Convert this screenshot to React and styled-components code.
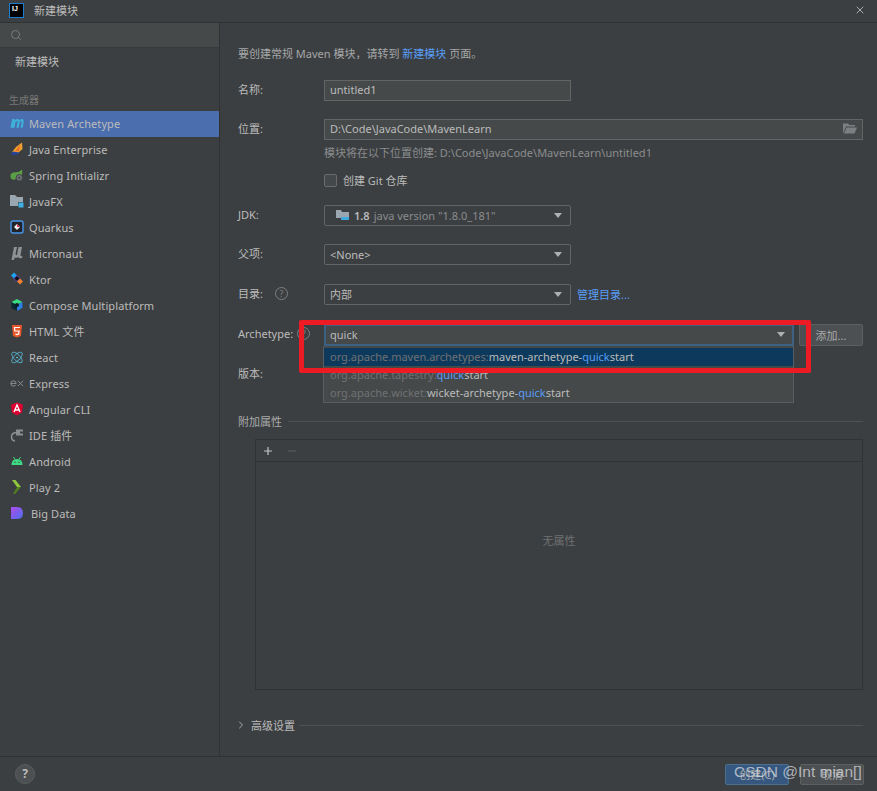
import React from 'react';
import styled, { createGlobalStyle } from 'styled-components';
import { Search, X, ChevronRight, Plus, Minus, Atom } from 'lucide-react';

const GlobalStyle = createGlobalStyle`
  html, body { margin: 0; padding: 0; background: #3c3f41; }
  body { font-family: "Noto Sans", "Noto Sans CJK SC", sans-serif; font-size: 11px; color: #bbbbbb; }
`;

const Dialog = styled.div`
  position: relative;
  width: 877px;
  height: 791px;
  overflow: hidden;
  display: flex;
  flex-direction: column;
  background: #3c3f41;
`;

const TitleBar = styled.div`
  height: 20px;
  flex: none;
  display: flex;
  align-items: center;
  padding: 0 11px 2px 9px;
  gap: 10px;
  border-bottom: 1px solid #323232;
  color: #bbbbbb;
  font-size: 11px;
`;

const AppLogo = styled.div`
  width: 15px;
  height: 15px;
  background: #000;
  border: 1px solid #1a7fd0;
  color: #fff;
  font: 700 7px/9px "Liberation Sans", sans-serif;
  box-sizing: border-box;
  padding-left: 2px;
`;

const TitleText = styled.span`
  flex: 1;
`;

const Body = styled.div`
  flex: 1;
  display: flex;
  min-height: 0;
`;

const Sidebar = styled.div`
  width: 219px;
  flex: none;
  border-right: 1px solid #323232;
  display: flex;
  flex-direction: column;
`;

const SearchBox = styled.div`
  height: 24px;
  background: #45494a;
  border-bottom: 1px solid #383b3d;
  display: flex;
  align-items: center;
  padding-left: 10px;
  color: #7a7d7f;
`;

const NewModule = styled.div`
  height: 28px;
  line-height: 28px;
  padding-left: 15px;
  color: #bbbbbb;
`;

const GroupLabel = styled.div`
  margin-top: 14px;
  height: 21px;
  line-height: 20px;
  padding-left: 9px;
  font-size: 10px;
  color: #787878;
`;

const Item = styled.div`
  box-sizing: border-box;
  height: 26px;
  display: flex;
  align-items: center;
  gap: ${p => p.$gap || 5}px;
  padding: 0 0 2px 10px;
  font-size: 11px;
  letter-spacing: 0.1px;
  color: #bbbbbb;
  background: ${p => (p.$active ? '#4b6eaf' : 'transparent')};
`;

const IconSlot = styled.span`
  width: 14px;
  height: 14px;
  display: flex;
  align-items: center;
  justify-content: center;
  flex: none;
`;

const Main = styled.div`
  flex: 1;
  min-width: 0;
  position: relative;
  display: flex;
  flex-direction: column;
  padding: 22px 14px 0 18px;
`;

const Intro = styled.div`
  height: 18px;
  line-height: 18px;
  color: #a5a7a8;
  margin-bottom: 17px;
`;

const Link = styled.span`
  color: #589df6;
`;

const DirLink = styled(Link)`
  margin-left: 6px;
  padding-bottom: 2px;
`;

const Row = styled.div`
  display: flex;
  align-items: center;
  height: ${p => p.$h || 21}px;
  margin-bottom: ${p => p.$mb ?? 18}px;
`;

const Label = styled.div`
  width: 86px;
  flex: none;
  display: flex;
  align-items: center;
  gap: ${p => p.$gap || 6}px;
  padding-bottom: 3px;
  color: #bbbbbb;
`;

const Field = styled.div`
  box-sizing: border-box;
  height: 100%;
  width: ${p => p.$w || '247px'};
  flex: ${p => (p.$grow ? 1 : 'none')};
  display: flex;
  align-items: center;
  padding: 0 5px 2px;
  background: #45494a;
  border: 1px solid #646464;
  color: #bbbbbb;
`;

const Select = styled.div`
  box-sizing: border-box;
  height: 100%;
  width: ${p => p.$w || '247px'};
  flex: none;
  display: flex;
  align-items: center;
  gap: 4px;
  padding: 0 5px 1px;
  background: #3c3f41;
  border: 1px solid #646464;
  border-radius: 2px;
  color: #bbbbbb;
`;

const ActiveSelect = styled(Select)`
  background: #45494a;
  border: 2px solid #3d6185;
  border-radius: 0;
  color: #bbbbbb;
  padding: 0 4px 2px;
`;

const Caret = styled.span`
  margin-left: auto;
  margin-right: 3px;
  width: 0;
  height: 0;
  border-left: 4px solid transparent;
  border-right: 4px solid transparent;
  border-top: 5px solid #aeb0b2;
`;

const Help = styled.span`
  width: 11px;
  height: 11px;
  border: 1px solid #7e8183;
  border-radius: 50%;
  color: #7e8183;
  font-size: 9px;
  line-height: 11px;
  text-align: center;
`;

const Hint = styled.div`
  height: 20px;
  line-height: 18px;
  margin-left: 86px;
  margin-bottom: 7px;
  color: #8a8c8e;
`;

const CheckRow = styled.label`
  height: 18px;
  margin-left: 86px;
  margin-bottom: 16px;
  display: flex;
  align-items: center;
  gap: 6px;
`;

const CheckBox = styled.span`
  width: 11px;
  height: 11px;
  border: 1px solid #6b6b6b;
  border-radius: 2px;
  background: #43494a;
`;

const Muted = styled.span`
  color: #8a8c8e;
`;

const Strong = styled.span`
  color: #bbbbbb;
  font-weight: 600;
`;

const JdkIcon = styled.svg`
  margin-left: 6px;
`;

const FolderIcon = styled.svg`
  margin-left: auto;
`;

const AddButton = styled.div`
  box-sizing: border-box;
  width: 64px;
  height: 100%;
  margin-left: 5px;
  display: flex;
  align-items: center;
  justify-content: center;
  background: #4c5052;
  border: 1px solid #5e6060;
  border-radius: 2px;
  color: #a8aaab;
`;

const Popup = styled.div`
  position: absolute;
  left: 103px;
  top: 323px;
  width: 469px;
  padding-top: 2px;
  background: #45494a;
  border: 1px solid #5a5d5f;
  border-top: none;
  z-index: 2;
`;

const PopupRow = styled.div`
  height: 18px;
  line-height: 18px;
  padding-left: 6px;
  color: #bbbbbb;
  background: ${p => (p.$active ? '#0d3a5c' : 'transparent')};
`;

const Group = styled.span`
  color: #6f7173;
`;

const Match = styled.span`
  color: #589df6;
`;

const SectionTitle = styled.div`
  display: flex;
  align-items: center;
  gap: 6px;
  height: 18px;
  color: #a9abac;
  &::after {
    content: "";
    flex: 1;
    height: 1px;
    background: #515151;
  }
`;

const PropsPanel = styled.div`
  margin: 9px 0 0 17px;
  height: 251px;
  box-sizing: border-box;
  border: 1px solid #323232;
  display: flex;
  flex-direction: column;
`;

const PanelTools = styled.div`
  box-sizing: border-box;
  height: 22px;
  flex: none;
  display: flex;
  align-items: center;
  gap: 12px;
  padding-left: 6px;
  border-bottom: 1px solid #323232;
`;

const PanelEmpty = styled.div`
  flex: 1;
  display: flex;
  align-items: flex-start;
  justify-content: center;
  padding-top: 70px;
  color: #6f7173;
`;

const Advanced = styled(SectionTitle)`
  margin-top: 26px;
  gap: 4px;
  color: #bbbbbb;
`;

const AdvancedChevron = styled(ChevronRight)`
  margin-left: -3px;
`;

const Footer = styled.div`
  height: 34px;
  flex: none;
  border-top: 1px solid #323232;
  display: flex;
  align-items: center;
  padding: 0 13px 0 15px;
  gap: 11px;
`;

const HelpButton = styled.div`
  width: 20px;
  height: 20px;
  border-radius: 50%;
  background: #4c5052;
  border: 1px solid #5a5d5f;
  box-sizing: border-box;
  margin-right: auto;
  color: #bbbbbb;
  font-weight: 700;
  font-size: 12px;
  line-height: 18px;
  text-align: center;
`;

const Button = styled.div`
  box-sizing: border-box;
  width: 64px;
  height: 21px;
  display: flex;
  align-items: center;
  justify-content: center;
  border-radius: 2px;
  color: #a9abac;
  background: ${p => (p.$primary ? '#365880' : '#4c5052')};
  border: 1px solid ${p => (p.$primary ? '#4c708c' : '#5e6060')};
`;

const Highlight = styled.div`
  position: absolute;
  left: 299px;
  top: 320px;
  width: 512px;
  height: 53px;
  box-sizing: border-box;
  border: 5px solid #ed1c24;
  border-radius: 2px;
  z-index: 3;
  pointer-events: none;
`;

const Watermark = styled.div`
  position: absolute;
  left: 734px;
  top: 761px;
  font: 15.5px/22px "Liberation Sans", sans-serif;
  color: rgba(220, 222, 224, 0.72);
  white-space: nowrap;
  z-index: 4;
`;

const icons = {
  maven: (
    <svg width="16" height="12" viewBox="0 2 16 11"><path d="M0.500 13 L2.500 3 H5.500 L5.500 4.500 Q7.500 2.500 9 3 Q10.500 3.200 10.700 4.500 Q12.500 2.500 14.300 3 Q16 3.500 15.700 6 L14.500 13 H12 L13.200 6.500 Q13.200 5.200 12.200 5.600 Q11.200 6 11 7 L10 13 H7.400 L8.600 6.500 Q8.600 5.200 7.600 5.600 Q6.500 6 6.200 7 L5.200 13 Z" fill="#3fb1d8" /></svg>
  ),
  java: (
    <svg width="14" height="14" viewBox="0 0 14 14"><path d="M2 10 L6 5 L12 0.500 L12.500 7 L8 11 Z" fill="#f0a030" /><path d="M0.500 13 L8 12.500 L9 10.500 L3 9.500 Z" fill="#23459c" /><path d="M5 9.500 L10 3 L9 9 Z" fill="#e76f24" /></svg>
  ),
  spring: (
    <svg width="15" height="14" viewBox="0 0 15 14"><path d="M0.500 8 Q0.500 4 6 4 Q10 4 13 1 Q14 8 10 10 L4 12 Q0.500 12 0.500 8 Z" fill="#5a9e46" /><circle cx="10" cy="10" r="3.500" fill="#6e7275" stroke="#3c3f41" /><circle cx="10" cy="10" r="1.200" fill="#3c3f41" /></svg>
  ),
  javafx: (
    <svg width="14" height="14" viewBox="0 0 14 14"><path d="M0 1 H5 L7 3 H13 V8 H8 V12 H0 Z" fill="#9aa7b0" /><rect x="8.500" y="8.500" width="5" height="5" fill="#3fb1e5" /></svg>
  ),
  quarkus: (
    <svg width="14" height="14" viewBox="0 0 14 14"><rect x="1" y="1" width="12" height="12" rx="2" fill="#20242a" stroke="#4695eb" strokeWidth="1.400" /><path d="M7 4 L10 7 L7 10 L4 7 Z" fill="#f0f0f0" /><path d="M7 4 L10 7 L7 7 Z" fill="#e0344a" /></svg>
  ),
  micronaut: (
    <svg width="14" height="14" viewBox="0 0 14 14"><path d="M4 1 H7 L5.500 8 Q5.500 9.500 7 9 L8.500 1 H12 L10.500 9 Q10.500 10.500 12.500 10 L12 12 Q9 13 8 11 Q6 12.500 4.700 11.500 L4 14 H1.500 Z" fill="#8e9295" /></svg>
  ),
  ktor: (
    <svg width="14" height="14" viewBox="0 0 14 14"><path d="M4 0.500 L7 3.500 L4 6.500 L1 3.500 Z" fill="#1aa4f2" /><path d="M7 3.500 L10 6.500 L7 9.500 L4 6.500 Z" fill="#111" stroke="#7d4de0" strokeWidth=".8" /><path d="M10 6.500 L13 9.500 L10 12.500 L7 9.500 Z" fill="#f08030" /></svg>
  ),
  compose: (
    <svg width="14" height="14" viewBox="0 0 14 14"><path d="M7 1 L12.500 4 V10 L7 13 L1.500 10 V4 Z" fill="#0b2a33" /><path d="M7 1 L12.500 4 L7 7 L1.500 4 Z" fill="#3ddc84" /><path d="M12.500 4 V10 L7 13 V7 Z" fill="#2f7fe0" /><circle cx="7" cy="7" r="2" fill="#0c1c22" /></svg>
  ),
  html: (
    <svg width="14" height="14" viewBox="0 0 14 14"><path d="M2 1 H12 L11 12 L7 13.500 L3 12 Z" fill="#e8562a" /><path d="M10 3.500 H4.500 L4.800 7 H9 L8.700 10 L7 10.600 L5.400 10" fill="none" stroke="#fff" strokeWidth="1.200" /></svg>
  ),
  react: <Atom size={15} color="#5cc9e8" strokeWidth={1.400} />,
  express: (
    <svg width="15" height="14" viewBox="0 0 16 14"><path d="M1 7.500 H7 Q7 4.500 4 4.500 Q1 4.500 1 7.500 Q1 10.500 4 10.500 Q6 10.500 6.800 9 M9 4.500 L15 10.500 M15 4.500 L9 10.500" fill="none" stroke="#8c8f91" strokeWidth="1.100" /></svg>
  ),
  angular: (
    <svg width="14" height="14" viewBox="0 0 14 14"><path d="M7 0.500 L13 2.800 L12 10.500 L7 13.500 L2 10.500 L1 2.800 Z" fill="#dd0031" /><path d="M4 10 L7 3 L10 10 M5.200 8 H8.800" fill="none" stroke="#fff" strokeWidth="1.300" /></svg>
  ),
  ide: (
    <svg width="14" height="14" viewBox="0 0 14 14"><path d="M6 1.500 H13 V3.500 H10 V5.500 H13 V7.500 H6 Z" fill="#8c8f91" /><path d="M6 4.500 Q1.500 5 1.500 9 Q1.500 12.500 5 13" fill="none" stroke="#8c8f91" strokeWidth="1.600" /></svg>
  ),
  android: (
    <svg width="14" height="14" viewBox="0 0 14 14"><path d="M1.500 11 Q1.500 5 7 5 Q12.500 5 12.500 11 Z" fill="#3ddc84" /><path d="M3.500 3 L5 5.500 M10.500 3 L9 5.500" stroke="#3ddc84" strokeWidth="1" /><circle cx="5" cy="8.300" r=".7" fill="#3c3f41" /><circle cx="9" cy="8.300" r=".7" fill="#3c3f41" /></svg>
  ),
  play: (
    <svg width="14" height="14" viewBox="0 0 14 14"><path d="M2 0 H5.500 L11 7 H7 Z" fill="#92c83e" /><path d="M11 7 L5 14 H3 L7 7 Z" fill="#4f7f1e" /></svg>
  ),
  bigdata: (
    <svg width="14" height="14" viewBox="0 0 14 14"><defs><linearGradient id="bd" x1="0" y1="0" x2="1" y2="1"><stop offset="0" stopColor="#b04be8" /><stop offset="1" stopColor="#4a70f0" /></linearGradient></defs><path d="M1 1 H7 Q13 1 13 7 Q13 13 7 13 H1 Z" fill="url(#bd)" /></svg>
  ),
};

const generators = [
  ['maven', 'Maven Archetype'],
  ['java', 'Java Enterprise'],
  ['spring', 'Spring Initializr'],
  ['javafx', 'JavaFX'],
  ['quarkus', 'Quarkus'],
  ['micronaut', 'Micronaut'],
  ['ktor', 'Ktor'],
  ['compose', 'Compose Multiplatform'],
  ['html', 'HTML 文件'],
  ['react', 'React'],
  ['express', 'Express'],
  ['angular', 'Angular CLI'],
  ['ide', 'IDE 插件'],
  ['android', 'Android'],
  ['play', 'Play 2'],
  ['bigdata', 'Big Data'],
];

const App = () => {
  return (
    <Dialog>
      <GlobalStyle />
      <TitleBar>
        <AppLogo>IJ</AppLogo>
        <TitleText>新建模块</TitleText>
        <X size={12} color="#a9abac" />
      </TitleBar>
      <Body>
        <Sidebar>
          <SearchBox><Search size={12} /></SearchBox>
          <NewModule>新建模块</NewModule>
          <GroupLabel>生成器</GroupLabel>
          {generators.map(([key, name]) => (
            <Item key={key} $active={key === 'maven'} $gap={key === 'bigdata' ? 7 : 5}>
              <IconSlot>{icons[key]}</IconSlot>
              {name}
            </Item>
          ))}
        </Sidebar>
        <Main>
          <Intro>要创建常规 Maven 模块，请转到 <Link>新建模块</Link> 页面。</Intro>
          <Row>
            <Label>名称:</Label>
            <Field>untitled1</Field>
          </Row>
          <Row $mb={4}>
            <Label>位置:</Label>
            <Field $grow>
              D:\Code\JavaCode\MavenLearn
              <FolderIcon width="14" height="11" viewBox="0 0 14 11">
                <path d="M0 0.500 H5 L6.500 2 H12 V3.500 H3 L0 10.500 Z" fill="#7d8082" />
                <path d="M3.500 4.500 H14 L11.500 10.500 H1 Z" fill="#7d8082" />
              </FolderIcon>
            </Field>
          </Row>
          <Hint>模块将在以下位置创建: D:\Code\JavaCode\MavenLearn\untitled1</Hint>
          <CheckRow><CheckBox />创建 Git 仓库</CheckRow>
          <Row>
            <Label>JDK:</Label>
            <Select>
              <JdkIcon width="14" height="12" viewBox="0 0 14 12"><path d="M0 1 H5 L6 3 H13 V9 H0 Z" fill="#9aa7b0" /><rect x="5" y="8" width="8" height="3" fill="#3fa9e0" /></JdkIcon>
              <Strong>1.8</Strong> <Muted>java version "1.8.0_181"</Muted>
              <Caret />
            </Select>
          </Row>
          <Row $mb={19}>
            <Label>父项:</Label>
            <Select>&lt;None&gt;<Caret /></Select>
          </Row>
          <Row $mb={19}>
            <Label $gap={12}>目录: <Help>?</Help></Label>
            <Select>内部<Caret /></Select>
            <DirLink>管理目录...</DirLink>
          </Row>
          <Row $h={22} $mb={17}>
            <Label $gap={4}>Archetype: <Help>?</Help></Label>
            <ActiveSelect $w="470px">quick<Caret /></ActiveSelect>
            <AddButton>添加...</AddButton>
          </Row>
          <Row $h={22} $mb={27}>
            <Label>版本:</Label>
          </Row>
          <SectionTitle>附加属性</SectionTitle>
          <PropsPanel>
            <PanelTools>
              <Plus size={12} color="#c4c6c7" strokeWidth={2.4} />
              <Minus size={12} color="#5e6062" strokeWidth={2} />
            </PanelTools>
            <PanelEmpty>无属性</PanelEmpty>
          </PropsPanel>
          <Advanced>
            <AdvancedChevron size={12} color="#a9abac" />
            高级设置
          </Advanced>
          <Popup>
            <PopupRow $active><Group>org.apache.maven.archetypes:</Group>maven-archetype-<Match>quick</Match>start</PopupRow>
            <PopupRow><Group>org.apache.tapestry:</Group><Match>quick</Match>start</PopupRow>
            <PopupRow><Group>org.apache.wicket:</Group>wicket-archetype-<Match>quick</Match>start</PopupRow>
          </Popup>
        </Main>
      </Body>
      <Footer>
        <HelpButton>?</HelpButton>
        <Button $primary>创建(C)</Button>
        <Button>取消</Button>
      </Footer>
      <Highlight />
      <Watermark>CSDN @Int mian[]</Watermark>
    </Dialog>
  );
};

export default App;
